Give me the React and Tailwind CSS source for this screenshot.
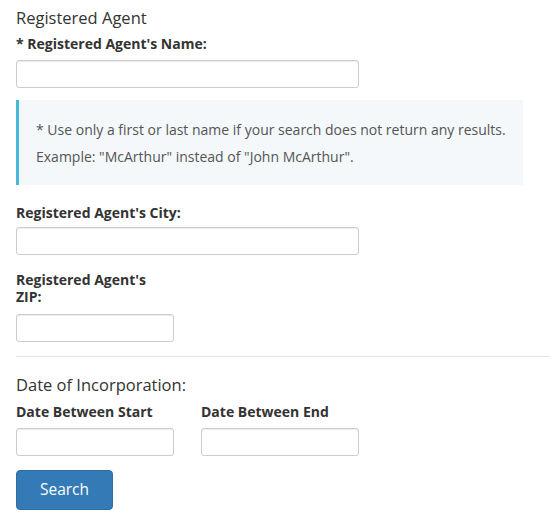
import React from 'react'

const font = { fontFamily: '"Open Sans", "Noto Sans", sans-serif' }

function Field({ label, width = 'w-[343px]', labelClass = '', gap = 'mb-[8px]' }) {
  return (
    <div className="flex flex-col">
      <label className={`text-[14px] font-bold text-[#333] leading-[17px] ${gap} ${labelClass}`}>{label}</label>
      <input
        type="text"
        className={`${width} h-[28px] border border-[#ccc] rounded-[3px] bg-white shadow-[inset_0_1px_1px_rgba(0,0,0,0.075)] outline-none`}
      />
    </div>
  )
}

export default function App() {
  return (
    <div className="bg-white text-[#333] w-[550px] h-[516px] pl-4 pt-[7px]" style={font}>
      <h3 className="text-[16.5px] leading-[22px] mb-[6px]">Registered Agent</h3>
      <Field label="* Registered Agent's Name:" />

      <div className="mt-[12px] w-[507px] h-[85px] bg-[#f4f8fa] border-l-[3px] border-[#46b8da] pl-[17px] pt-[16px] text-[14px] text-[#555] leading-[27px]">
        <p>* Use only a first or last name if your search does not return any results.</p>
        <p>Example: "McArthur" instead of "John McArthur".</p>
      </div>

      <div className="mt-[19px]">
        <Field label="Registered Agent's City:" gap="mb-[6px]" />
      </div>
      <div className="mt-[16px]">
        <Field label="Registered Agent's ZIP:" width="w-[158px]" labelClass="w-[150px]" gap="mb-[9px]" />
      </div>

      <hr className="mt-[14px] border-t border-[#e5e5e5]" />

      <h4 className="mt-[17px] text-[16.5px] leading-[22px] mb-[7px]">Date of Incorporation:</h4>
      <div className="flex gap-[27px]">
        <Field label="Date Between Start" width="w-[158px]" />
        <Field label="Date Between End" width="w-[158px]" />
      </div>

      <button className="mt-[14px] w-[97px] h-[40px] bg-[#337ab7] border border-[#2e6da4] rounded-[4px] text-white text-[15.5px]">
        Search
      </button>
    </div>
  )
}
